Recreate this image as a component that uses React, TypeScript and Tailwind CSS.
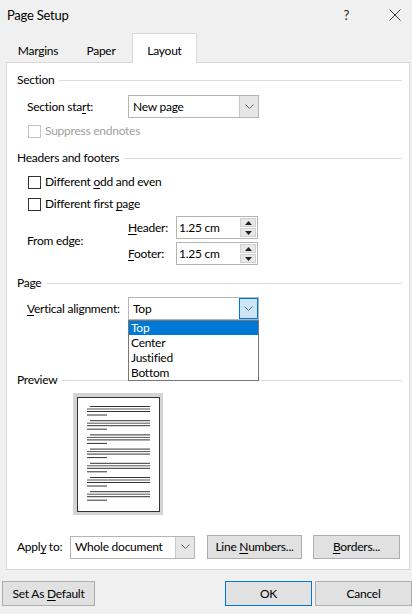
import React from "react";

const U = ({ children }: { children: React.ReactNode }) => (
  <span className="underline decoration-1 underline-offset-[2px]">{children}</span>
);

function Chevron() {
  return (
    <svg width="9" height="6" viewBox="0 0 9 6">
      <polyline points="0.5,0.5 4.5,4.5 8.5,0.5" fill="none" stroke="#606060" strokeWidth="1" />
    </svg>
  );
}

function Select({
  value,
  width,
  active = false,
  children,
}: {
  value: string;
  width: string;
  active?: boolean;
  children?: React.ReactNode;
}) {
  return (
    <div className={`relative ${width} h-[23px] border border-[#b4b4b4] bg-white flex`}>
      <div className="flex-1 flex items-center pl-[4px] whitespace-nowrap">{value}</div>
      <div
        className={
          active
            ? "w-[19px] border border-[#0078d7] bg-[#cce4f7] flex items-center justify-center"
            : "w-[19px] border-l border-[#c8c8c8] bg-[#e6e6e6] flex items-center justify-center"
        }
      >
        <Chevron />
      </div>
      {children}
    </div>
  );
}

function Check({ label, disabled = false }: { label: React.ReactNode; disabled?: boolean }) {
  return (
    <div className="flex items-center h-[14px] pl-[11px]">
      <div
        className={
          disabled
            ? "w-[13px] h-[13px] border border-[#c4c4c4] bg-white"
            : "w-[13px] h-[13px] border border-[#333333] bg-white"
        }
      />
      <span className={disabled ? "ml-[4px] text-[#a0a0a0] whitespace-nowrap" : "ml-[4px] whitespace-nowrap"}>
        {label}
      </span>
    </div>
  );
}

function GroupHead({ label }: { label: string }) {
  return (
    <div className="flex items-center h-[16px] pr-[7px]">
      <span className="whitespace-nowrap">{label}</span>
      <div className="flex-1 h-px bg-[#dcdcdc] ml-[5px]" />
    </div>
  );
}

function Spin({ value }: { value: string }) {
  return (
    <div className="w-[82px] h-[23px] border border-[#b4b4b4] bg-white flex">
      <div className="flex-1 flex items-center pl-[2px] whitespace-nowrap">{value}</div>
      <div className="w-[18px] flex flex-col gap-px p-px">
        <div className="flex-1 bg-[#e8e8e8] border border-[#d0d0d0] flex items-center justify-center">
          <svg width="7" height="4" viewBox="0 0 7 4">
            <polygon points="0,4 7,4 3.5,0" fill="#222" />
          </svg>
        </div>
        <div className="flex-1 bg-[#e8e8e8] border border-[#d0d0d0] flex items-center justify-center">
          <svg width="7" height="4" viewBox="0 0 7 4">
            <polygon points="0,0 7,0 3.5,4" fill="#222" />
          </svg>
        </div>
      </div>
    </div>
  );
}

function Btn({
  children,
  width,
  primary = false,
}: {
  children: React.ReactNode;
  width: string;
  primary?: boolean;
}) {
  return (
    <div
      className={`${width} h-full flex items-center justify-center bg-[#e1e1e1] border ${
        primary ? "border-[#0078d7]" : "border-[#adadad]"
      }`}
    >
      <span className="whitespace-nowrap">{children}</span>
    </div>
  );
}

function PagePreview() {
  const groups = [0, 1, 2, 3, 4, 5, 6];
  return (
    <div className="ml-[56px] mt-[5px] w-[90px] h-[122px] bg-[#d4d4d4] pt-[4px] pl-[4px] pr-[3px] pb-[3px]">
      <div className="w-full h-full bg-white border border-[#333]">
        <svg width="81" height="113" viewBox="0 0 81 113">
          {groups.map((g) => {
            const y = 8.5 + g * 14.2;
            return (
              <g key={g} stroke="#333" strokeWidth="1">
                <line x1="12" y1={y} x2="72" y2={y} />
                <line x1="9" y1={y + 2.5} x2="72" y2={y + 2.5} stroke="#555" />
                <line x1="9" y1={y + 5} x2="72" y2={y + 5} />
                <line x1="9" y1={y + 8.5} x2="29" y2={y + 8.5} />
              </g>
            );
          })}
        </svg>
      </div>
    </div>
  );
}

export default function App() {
  return (
    <div className="w-[412px] h-[614px] bg-[#f0f0f0] overflow-hidden text-[12px] leading-[16px] tracking-[-0.25px] text-black font-['Lato',sans-serif]">
      {/* Title bar */}
      <div className="h-[33px] flex items-start pt-[7px] pl-[7px]">
        <span className="text-[13px]">Page Setup</span>
        <span className="ml-auto mr-[40px] text-[13px] text-[#222]">?</span>
        <svg className="mt-[2px] mr-[11px]" width="12" height="12" viewBox="0 0 12 12">
          <line x1="0.5" y1="0.5" x2="11.5" y2="11.5" stroke="#333" strokeWidth="1" />
          <line x1="11.5" y1="0.5" x2="0.5" y2="11.5" stroke="#333" strokeWidth="1" />
        </svg>
      </div>

      {/* Tabs */}
      <div className="h-[29px] flex items-end pl-[6px]">
        <div className="w-[64px] h-[25px] flex items-end justify-center pb-[3px]">Margins</div>
        <div className="w-[62px] h-[25px] flex items-end justify-center pb-[3px]">Paper</div>
        <div className="relative z-10 w-[65px] h-[30px] -mb-px bg-white border border-b-0 border-[#d9d9d9] flex items-end justify-center pb-[4px]">
          Layout
        </div>
      </div>

      {/* Panel */}
      <div className="ml-[6px] w-[404px] h-[508px] bg-white border border-[#d9d9d9] pl-[10px] flex flex-col">
        <div className="mt-[9px]">
          <GroupHead label="Section" />
        </div>
        <div className="mt-[7px] flex items-center pl-[10px]">
          <div className="w-[101px] whitespace-nowrap">
            Section sta<U>r</U>t:
          </div>
          <Select value="New page" width="w-[131px]" />
        </div>
        <div className="mt-[6px]">
          <Check label="Suppress endnotes" disabled />
        </div>

        <div className="mt-[12px]">
          <GroupHead label="Headers and footers" />
        </div>
        <div className="mt-[9px]">
          <Check
            label={
              <>
                Different <U>o</U>dd and even
              </>
            }
          />
        </div>
        <div className="mt-[8px]">
          <Check
            label={
              <>
                Different first <U>p</U>age
              </>
            }
          />
        </div>
        <div className="mt-[5px] flex items-center pl-[10px]">
          <div className="w-[101px] pt-[1px] whitespace-nowrap">From edge:</div>
          <div className="flex flex-col gap-[3px]">
            <div className="flex items-center">
              <div className="w-[48px]">
                <U>H</U>eader:
              </div>
              <Spin value="1.25 cm" />
            </div>
            <div className="flex items-center">
              <div className="w-[48px]">
                <U>F</U>ooter:
              </div>
              <Spin value="1.25 cm" />
            </div>
          </div>
        </div>

        <div className="mt-[10px]">
          <GroupHead label="Page" />
        </div>
        <div className="relative z-20 mt-[6px] flex items-center pl-[10px]">
          <div className="w-[101px] whitespace-nowrap">
            <U>V</U>ertical alignment:
          </div>
          <Select value="Top" width="w-[131px]" active>
            <div className="absolute left-[-1px] top-[22px] w-[131px] bg-white border border-[#767676] flex flex-col">
              <div className="h-[14px] bg-[#0078d7] text-white flex items-center pl-[2px]">Top</div>
              <div className="h-[15px] flex items-center pl-[2px]">Center</div>
              <div className="h-[15px] flex items-center pl-[2px]">Justified</div>
              <div className="h-[15px] flex items-center pl-[2px]">Bottom</div>
            </div>
          </Select>
        </div>

        <div className="mt-[52px]">
          <GroupHead label="Preview" />
        </div>
        <PagePreview />

        <div className="mt-[20px] h-[24px] flex items-center">
          <div className="w-[53px] whitespace-nowrap">
            Appl<U>y</U> to:
          </div>
          <Select value="Whole document" width="w-[125px]" />
          <div className="ml-[12px] h-full">
            <Btn width="w-[95px]">
              Line <U>N</U>umbers...
            </Btn>
          </div>
          <div className="ml-[11px] h-full">
            <Btn width="w-[87px]">
              <U>B</U>orders...
            </Btn>
          </div>
        </div>
      </div>

      {/* Bottom buttons */}
      <div className="mt-[11px] h-[25px] flex pl-[2px]">
        <Btn width="w-[93px]">
          Set As <U>D</U>efault
        </Btn>
        <div className="ml-auto flex gap-[3px] h-full">
          <Btn width="w-[87px]" primary>
            OK
          </Btn>
          <Btn width="w-[97px]">Cancel</Btn>
        </div>
      </div>
    </div>
  );
}
